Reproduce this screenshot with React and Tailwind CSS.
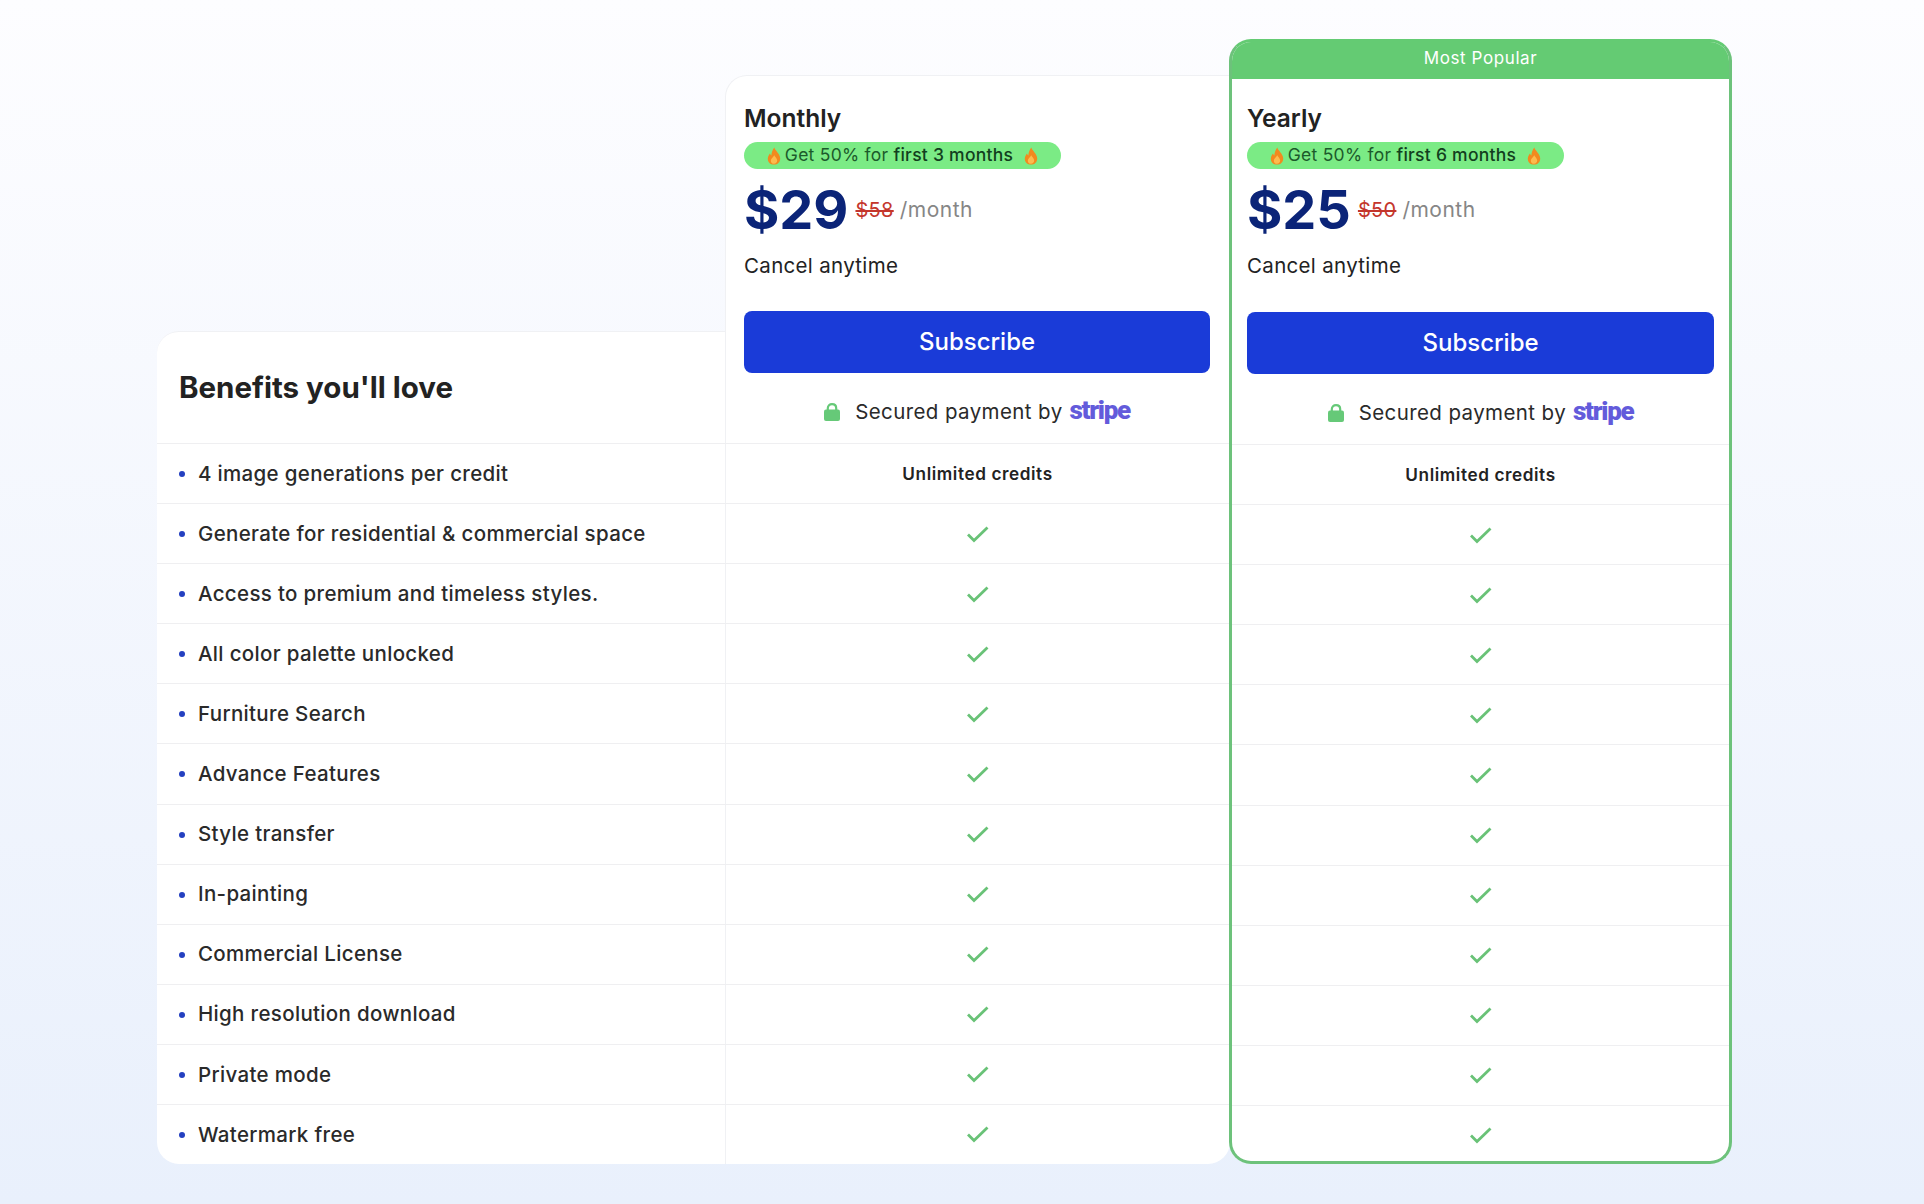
import React from 'react'

const FEATURES = [
  '4 image generations per credit',
  'Generate for residential & commercial space',
  'Access to premium and timeless styles.',
  'All color palette unlocked',
  'Furniture Search',
  'Advance Features',
  'Style transfer',
  'In-painting',
  'Commercial License',
  'High resolution download',
  'Private mode',
  'Watermark free',
]

function Flame() {
  return (
    <svg width="14" height="18" viewBox="0 0 14 18" className="shrink-0">
      <path d="M7.3 0.4C7.8 3 12.9 6.6 13.2 11.2C13.4 15 10.6 17.6 7 17.6C3.4 17.6 0.6 15 0.8 11.4C0.9 9.2 2 7.6 3 6.4C3.3 7.4 3.7 8 4.4 8.4C4.4 5.4 5.6 2.4 7.3 0.4Z" fill="#F28A1E" />
      <path d="M7.2 8.2C7.6 9.6 10.2 11 10.2 13.6C10.2 15.6 8.8 16.8 7 16.8C5.2 16.8 3.8 15.6 3.8 13.7C3.8 11.6 6.2 10.4 7.2 8.2Z" fill="#FDBB4E" />
    </svg>
  )
}

function Lock() {
  return (
    <svg width="16" height="18" viewBox="0 0 16 18" className="shrink-0">
      <path d="M3.8 7V5.2C3.8 2.8 5.6 1.2 8 1.2C10.4 1.2 12.2 2.8 12.2 5.2V7" fill="none" stroke="#66C978" strokeWidth="2.2" />
      <rect x="0" y="6.4" width="16" height="11.6" rx="2" fill="#66C978" />
    </svg>
  )
}

function Check() {
  return (
    <svg width="23" height="18" viewBox="0 0 23 18">
      <path d="M2 9.5L8 15.5L21.5 2.5" fill="none" stroke="#69C277" strokeWidth="2.8" />
    </svg>
  )
}

function PlanHeader({ name, months, price, was, className, buttonGap }) {
  return (
    <div className={className}>
      <div className="text-[24.5px] leading-[30px] font-semibold text-[#222222]">{name}</div>
      <div className="mt-[9px] w-[317px] h-[27px] rounded-full bg-[#7BEB85] flex items-center justify-center gap-[4px] text-[17.5px] text-[#1C5A2B]">
        <Flame />
        <span className="tracking-[0.25px]">
          Get 50% for <span className="font-medium text-[#123F1E]">first {months} months</span>
        </span>
        <span className="w-[3px]" />
        <Flame />
      </div>
      <div className="mt-[14px] h-[54px] flex items-center">
        <span className="text-[54px] leading-none font-bold text-[#0B2478]">{price}</span>
        <span className="ml-[7px] text-[20px] tracking-[0.3px] text-[#C4362C] line-through">{was}</span>
        <span className="ml-[6px] text-[21px] tracking-[0.5px] text-[#868686]">/month</span>
      </div>
      <div className="mt-[15px] h-[28px] flex items-center text-[20.5px] tracking-[0.32px] text-[#222222]">Cancel anytime</div>
      <button className={`${buttonGap} w-full h-[62px] rounded-[8px] bg-[#1A3BD8] text-white text-[24px] font-medium`}>
        Subscribe
      </button>
      <div className="mt-[27px] mb-[19px] h-[24px] flex items-center justify-center text-[20.5px] text-[#2A2A2A]">
        <Lock />
        <span className="ml-[15px] tracking-[0.4px]">Secured payment by</span>
        <span className="ml-[7px] -mt-[4px] text-[26px] leading-none font-black tracking-[-1.3px] text-[#635BDB] [font-family:'Roboto',sans-serif]">
          stripe
        </span>
      </div>
    </div>
  )
}

function PlanRows({ className }) {
  return (
    <div className={className}>
      <div className="h-[60.08px] border-t border-[#EFEFF1] flex items-center justify-center text-[17.2px] tracking-[0.58px] font-semibold text-[#222222]">
        Unlimited credits
      </div>
      {FEATURES.slice(1).map(f => (
        <div key={f} className="h-[60.08px] border-t border-[#EFEFF1] flex items-center justify-center">
          <Check />
        </div>
      ))}
    </div>
  )
}

export default function App() {
  return (
    <div className="h-[1204px] bg-gradient-to-b from-[#FDFDFF] to-[#E9F0FC] flex items-end pl-[157px] pb-[40px] font-['Inter',sans-serif]">
      {/* Benefits column */}
      <div className="w-[568px] bg-white rounded-tl-[22px] rounded-bl-[22px] border-t border-[#F0F1F4]">
        <div className="h-[111px] flex items-center pl-[22px] text-[29.5px] font-[650] text-[#222222]">
          Benefits you'll love
        </div>
        {FEATURES.map(f => (
          <div key={f} className="h-[60.08px] pt-[1px] border-t border-[#EFEFF1] flex items-center pl-[22px]">
            <span className="w-[6px] h-[6px] rounded-full bg-[#2440C0]" />
            <span className="ml-[13px] text-[20.5px] tracking-[0.33px] font-medium text-[#2A2A2A]">{f}</span>
          </div>
        ))}
      </div>

      {/* Monthly */}
      <div className="w-[505px] bg-white rounded-tl-[22px] rounded-br-[22px] border-t border-l border-[#F0F1F4]">
        <PlanHeader
          name="Monthly"
          months="3"
          price="$29"
          was="$58"
          className="pt-[27px] pl-[18px] pr-[20px]"
          buttonGap="mt-[31px]"
        />
        <PlanRows className="-ml-px" />
      </div>

      {/* Yearly */}
      <div className="w-[503px] -ml-px relative bg-white rounded-[22px] border-[3px] border-[#6DC27B] border-t-[#64CB73] overflow-hidden">
        <div className="h-[37px] pb-[3px] bg-[#64CB73] flex items-center justify-center text-[17px] tracking-[0.6px] text-white">
          Most Popular
        </div>
        <PlanHeader
          name="Yearly"
          months="6"
          price="$25"
          was="$50"
          className="pt-[24px] px-[15px]"
          buttonGap="mt-[32px]"
        />
        <PlanRows className="-mb-[4px]" />
      </div>
    </div>
  )
}
